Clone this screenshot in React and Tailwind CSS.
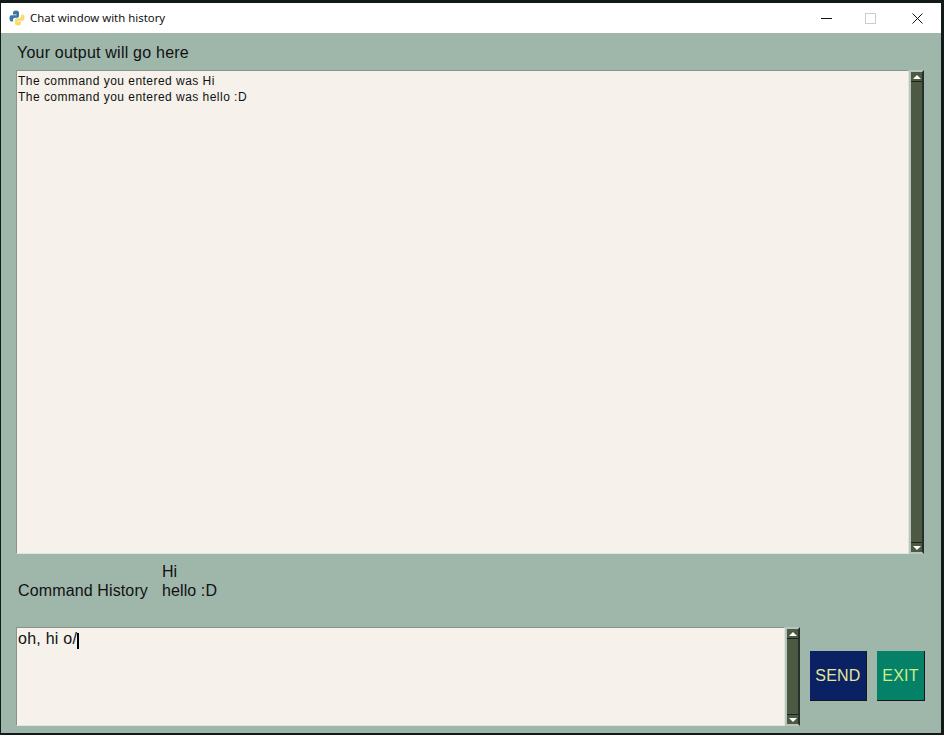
import React from "react";

const font = { fontFamily: '"Liberation Sans", Arial, sans-serif' };

const PythonIcon = () => (
  <svg width="16" height="16" viewBox="0 0 16 16">
    <path d="M7 0.500C4.800 0.500 4 1.500 4 2.800V4.600h3.500v.7H2.400C1 5.300 0.500 6.600 0.500 8.300s.6 3.200 1.900 3.200H4V9.800c0-1.200 1-2.100 2.200-2.100h2c1 0 1.800-.8 1.800-1.800V2.800C10 1.500 9.200 0.500 7 0.500z" fill="#3a76a6" />
    <path d="M9 15.500c2.200 0 3-1 3-2.300v-1.800H8.500v-.7h5.100c1.400 0 1.900-1.300 1.900-3s-.6-3.200-1.900-3.200H12v1.700c0 1.200-1 2.100-2.200 2.100h-2c-1 0-1.800.8-1.800 1.800v3.100c0 1.300.8 2.300 3 2.300z" fill="#f7dc6f" />
  </svg>
);

const Scrollbar = () => (
  <div className="flex w-[15px] shrink-0 flex-col border-2 border-[#b9c4bc] border-r-[#26302a] bg-[#4d5a43]">
    <div className="flex h-[10px] items-center justify-center border-b border-[#1d241c]">
      <div className="h-0 w-0 border-x-[4px] border-b-[4px] border-x-transparent border-b-white" />
    </div>
    <div className="flex-1" />
    <div className="flex h-[10px] items-center justify-center border-t border-[#1d241c]">
      <div className="h-0 w-0 border-x-[4px] border-t-[4px] border-x-transparent border-t-white" />
    </div>
  </div>
);

export default function App() {
  return (
    <div style={font} className="flex h-[735px] w-[944px] flex-col bg-[#111a18] pb-[2px] pl-px pr-[3px] pt-[3px]">
      {/* title bar */}
      <div className="flex h-[30px] items-center bg-white pl-[8px] text-[#111]">
        <PythonIcon />
        <span className="ml-[5px] text-[11.4px]" style={{ fontFamily: '"Noto Sans", sans-serif' }}>Chat window with history</span>
        <div className="ml-auto flex items-center pr-[18px]">
          <svg width="11" height="11" viewBox="0 0 11 11" className="mr-[33px]"><path d="M0 5.500h11" stroke="#111" strokeWidth="1" /></svg>
          <svg width="11" height="11" viewBox="0 0 11 11" className="mr-[36px]"><rect x=".5" y=".5" width="10" height="10" fill="none" stroke="#ccc" /></svg>
          <svg width="11" height="11" viewBox="0 0 11 11"><path d="M.5.500l10 10M10.500.500l-10 10" stroke="#111" strokeWidth="1" /></svg>
        </div>
      </div>

      {/* body */}
      <div className="flex flex-1 flex-col bg-[#9fb6ab] pl-[15px] pr-[16px]">
        <div className="flex h-[37px] items-center pl-px pt-[2px] text-[16px] tracking-[0.22px] text-[#111]">Your output will go here</div>

        <div className="flex h-[484px]">
          <div className="w-[893px] shrink-0 border border-[#8a9389] border-b-[#dfe5df] border-r-[#dfe5df] bg-[#f6f1eb] pl-px pt-[2px] text-[12px] leading-[16px] tracking-[0.47px] text-[#111]">
            <div>The command you entered was Hi</div>
            <div>The command you entered was hello :D</div>
          </div>
          <Scrollbar />
        </div>

        <div className="flex h-[73px] items-center pl-[2px] text-[16px] text-[#111]">
          <div className="w-[144px] tracking-[0.13px]">Command History</div>
          <div className="self-start pt-[8px] leading-[19px]">
            <div>Hi</div>
            <div className="tracking-[0.1px]">hello :D</div>
          </div>
        </div>

        <div className="flex h-[99px]">
          <div className="w-[769px] shrink-0 border border-[#8a9389] border-b-[#dfe5df] border-r-[#dfe5df] bg-[#f6f1eb] pl-px text-[16px] leading-[16px] tracking-[0.25px] text-[#111]">
            <div>oh, hi o/<span className="inline-block h-[16px] w-[2px] translate-y-[5px] bg-black" /></div>
          </div>
          <Scrollbar />
          <div className="ml-[10px] flex items-start gap-[10px] pt-[24px]">
            <button className="h-[50px] w-[57px] border-b border-r border-[#14171c] border-l-[#5d7397] border-t-[#5d7397] bg-[#0a2264] text-[16px] tracking-[0.2px] text-[#e6e79a]">SEND</button>
            <button className="h-[50px] w-[48px] border-b border-r border-[#14171c] bg-[#058168] text-[16px] tracking-[0.2px] text-[#cfee8a]">EXIT</button>
          </div>
        </div>
      </div>
    </div>
  );
}
